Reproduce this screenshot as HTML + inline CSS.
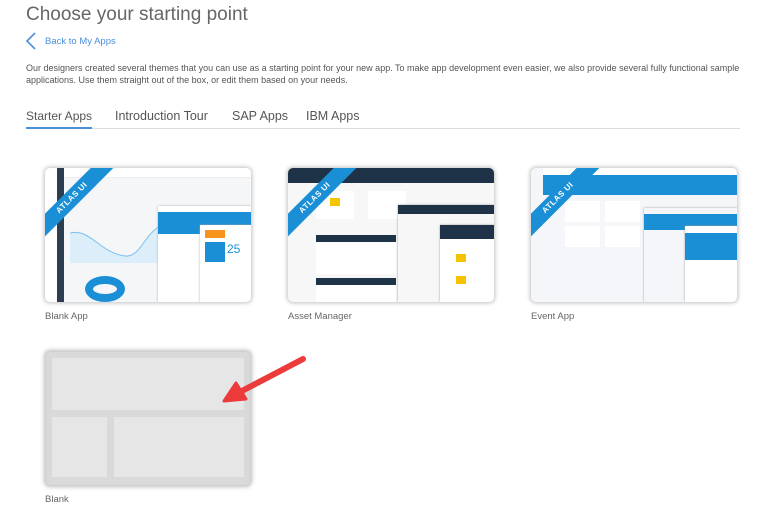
<!DOCTYPE html>
<html><head><meta charset="utf-8"><style>
*{margin:0;padding:0;box-sizing:border-box}
body{width:768px;height:522px;background:#fff;font-family:"Liberation Sans",sans-serif;position:relative;overflow:hidden;color:#555}
.a{position:absolute}
.card{position:absolute;border-radius:5px;box-shadow:0 0 4px 1px rgba(0,0,0,.25);overflow:hidden;background:#f2f4f7}
.lbl{position:absolute;font-size:9.5px;color:#666}
.rib{position:absolute;left:-28px;top:22px;width:110px;height:16px;background:#1a8fd6;color:#fff;font-size:8px;font-weight:bold;text-align:center;line-height:16px;transform:rotate(-45deg);letter-spacing:.5px}
</style></head><body>
<div class="a" style="left:26px;top:4px;font-size:19px;color:#666;font-weight:300">Choose your starting point</div>
<svg class="a" style="left:25px;top:32px" width="12" height="18"><path d="M10 1 L2 9 L10 17" stroke="#4a90d9" stroke-width="1.6" fill="none"/></svg>
<div class="a" style="left:45px;top:36px;font-size:9.5px;color:#4a90d9">Back to My Apps</div>
<div class="a" style="left:26px;top:62px;white-space:nowrap;font-size:9px;line-height:12px;color:#555">Our designers created several themes that you can use as a starting point for your new app. To make app development even easier, we also provide several fully functional sample<br>applications. Use them straight out of the box, or edit them based on your needs.</div>
<div class="a" style="left:26px;top:109px;font-size:12px;color:#555">Starter Apps</div>
<div class="a" style="left:115px;top:109px;font-size:12.5px;color:#555">Introduction Tour</div>
<div class="a" style="left:232px;top:109px;font-size:12.5px;color:#555">SAP Apps</div>
<div class="a" style="left:306px;top:109px;font-size:12.5px;color:#555">IBM Apps</div>
<div class="a" style="left:26px;top:128px;width:714px;height:1px;background:#ddd"></div>
<div class="a" style="left:26px;top:127px;width:66px;height:2px;background:#4a90d9"></div>

<!-- Blank App -->
<div class="card" style="left:45px;top:168px;width:206px;height:134px;background:#fff">
 <div class="a" style="left:12px;top:0;width:7px;height:134px;background:#2c3e50"></div>
 <div class="a" style="left:19px;top:0;width:187px;height:10px;background:#fff;border-bottom:1px solid #eee"></div>
 <div class="a" style="left:19px;top:10px;width:187px;height:124px;background:#f4f6f8"></div>
 <svg class="a" style="left:25px;top:50px" width="110" height="45"><path d="M0 15 C20 10 30 35 55 38 C75 40 75 0 110 5 L110 45 L0 45Z" fill="#dbeefa"/><path d="M0 15 C20 10 30 35 55 38 C75 40 75 0 110 5" stroke="#7cc0ee" fill="none"/></svg>
 <div class="a" style="left:113px;top:38px;width:93px;height:96px;background:#fff;box-shadow:0 0 2px #aaa"></div>
 <div class="a" style="left:113px;top:44px;width:93px;height:22px;background:#1a8fd6"></div>
 <div class="a" style="left:155px;top:57px;width:51px;height:77px;background:#fff;box-shadow:0 0 2px #aaa"></div>
 <div class="a" style="left:160px;top:74px;width:20px;height:20px;background:#1a8fd6"></div>
 <div class="a" style="left:182px;top:74px;font-size:12px;color:#1a8fd6">25</div>
 <div class="a" style="left:160px;top:62px;width:20px;height:8px;background:#f7941d"></div>
 <div class="a" style="left:40px;top:108px;width:40px;height:26px;border-radius:50%;border:8px solid #1a8fd6"></div>
 <div class="rib">ATLAS UI</div>
</div>
<div class="lbl" style="left:45px;top:311px">Blank App</div>

<!-- Asset Manager -->
<div class="card" style="left:288px;top:168px;width:206px;height:134px;background:#f7f7f7">
 <div class="a" style="left:0;top:0;width:206px;height:15px;background:#1e3348"></div>
 <div class="a" style="left:28px;top:23px;width:38px;height:28px;background:#fff"></div>
 <div class="a" style="left:42px;top:30px;width:10px;height:8px;background:#f5c400"></div>
 <div class="a" style="left:80px;top:23px;width:38px;height:28px;background:#fff"></div>
 <div class="a" style="left:28px;top:67px;width:80px;height:7px;background:#1e3348"></div>
 <div class="a" style="left:28px;top:74px;width:80px;height:32px;background:#fff"></div>
 <div class="a" style="left:28px;top:110px;width:80px;height:7px;background:#1e3348"></div>
 <div class="a" style="left:28px;top:117px;width:80px;height:17px;background:#fff"></div>
 <div class="a" style="left:110px;top:37px;width:96px;height:97px;background:#f7f7f7;box-shadow:0 0 2px #999"></div>
 <div class="a" style="left:110px;top:37px;width:96px;height:9px;background:#1e3348"></div>
 <div class="a" style="left:152px;top:57px;width:54px;height:77px;background:#fff;box-shadow:0 0 2px #999"></div>
 <div class="a" style="left:152px;top:57px;width:54px;height:14px;background:#1e3348"></div>
 <div class="a" style="left:168px;top:86px;width:10px;height:8px;background:#f5c400"></div>
 <div class="a" style="left:168px;top:108px;width:10px;height:8px;background:#f5c400"></div>
 <div class="rib">ATLAS UI</div>
</div>
<div class="lbl" style="left:288px;top:311px">Asset Manager</div>

<!-- Event App -->
<div class="card" style="left:531px;top:168px;width:206px;height:134px;background:#f4f6f9">
 <div class="a" style="left:12px;top:0;width:194px;height:7px;background:#fff"></div>
 <div class="a" style="left:12px;top:7px;width:194px;height:20px;background:#1a8fd6"></div>
 <div class="a" style="left:34px;top:33px;width:35px;height:21px;background:#fff"></div>
 <div class="a" style="left:74px;top:33px;width:35px;height:21px;background:#fff"></div>
 <div class="a" style="left:34px;top:58px;width:35px;height:21px;background:#fff"></div>
 <div class="a" style="left:74px;top:58px;width:35px;height:21px;background:#fff"></div>
 <div class="a" style="left:113px;top:40px;width:93px;height:94px;background:#f4f6f9;box-shadow:0 0 2px #999"></div>
 <div class="a" style="left:113px;top:46px;width:93px;height:16px;background:#1a8fd6"></div>
 <div class="a" style="left:154px;top:58px;width:52px;height:76px;background:#fff;box-shadow:0 0 2px #999"></div>
 <div class="a" style="left:154px;top:65px;width:52px;height:27px;background:#1a8fd6"></div>
 <div class="rib">ATLAS UI</div>
</div>
<div class="lbl" style="left:531px;top:311px">Event App</div>

<!-- Blank -->
<div class="card" style="left:45px;top:351px;width:206px;height:135px;background:#d9d9d9;border:1px solid #cfcfcf">
 <div class="a" style="left:6px;top:6px;width:192px;height:52px;background:#e6e6e6"></div>
 <div class="a" style="left:6px;top:65px;width:55px;height:60px;background:#e6e6e6"></div>
 <div class="a" style="left:68px;top:65px;width:130px;height:60px;background:#e6e6e6"></div>
</div>
<div class="lbl" style="left:45px;top:494px">Blank</div>

<svg class="a" style="left:210px;top:350px" width="100" height="60"><path d="M93 9 L30 42" stroke="#ec3b3b" stroke-width="6" stroke-linecap="round"/><path d="M14 51 L26 33 L36 49Z" fill="#ec3b3b" stroke="#ec3b3b" stroke-width="3" stroke-linejoin="round"/></svg>
</body></html>
